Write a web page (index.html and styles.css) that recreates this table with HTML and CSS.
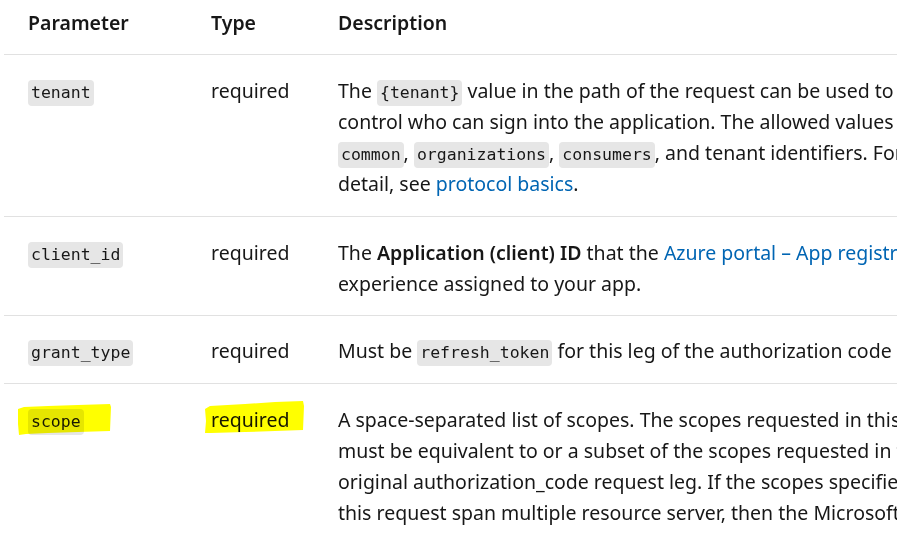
FILE: index.html
```html
<!DOCTYPE html>
<html lang="en">
<head>
<meta charset="utf-8">
<title>Parameters</title>
<link rel="stylesheet" href="styles.css">
</head>
<body>
<div class="wrap">
  <table class="params">
    <colgroup>
      <col class="col-param">
      <col class="col-type">
      <col class="col-desc">
    </colgroup>
    <thead>
      <tr><th>Parameter</th><th>Type</th><th>Description</th></tr>
    </thead>
    <tbody>
      <tr>
        <td><code>tenant</code></td>
        <td>required</td>
        <td>The <code>{tenant}</code> value in the path of the request can be used to<br>control who can sign into the application. The allowed values are<br><code>common</code>, <code>organizations</code>, <code>consumers</code>, and tenant identifiers. For more<br>detail, see <a href="#">protocol basics</a>.</td>
      </tr>
      <tr class="row-tight">
        <td><code>client_id</code></td>
        <td>required</td>
        <td>The <strong>Application (client) ID</strong> that the <a href="#">Azure portal – App registrations</a><br>experience assigned to your app.</td>
      </tr>
      <tr class="row-compact">
        <td><code>grant_type</code></td>
        <td>required</td>
        <td>Must be <code>refresh_token</code> for this leg of the authorization code flow.</td>
      </tr>
      <tr>
        <td><code>scope</code></td>
        <td>required</td>
        <td>A space-separated list of scopes. The scopes requested in this leg<br>must be equivalent to or a subset of the scopes requested in the<br>original authorization_code request leg. If the scopes specified in<br>this request span multiple resource server, then the Microsoft</td>
      </tr>
    </tbody>
  </table>
  <svg class="marker marker-scope" width="94" height="32" viewBox="0 0 94 32" aria-hidden="true">
    <polygon points="0,5 6,3 30,2 60,1 92,0 93,3 92,27 60,28 30,29 8,30 1,31 0,20"/>
  </svg>
  <svg class="marker marker-type" width="100" height="33" viewBox="0 0 100 33" aria-hidden="true">
    <polygon points="0,8 5,5 40,3 70,1 98,0 99,5 98,29 70,30 40,31 6,32 0,32 1,20"/>
  </svg>
</div>
</body>
</html>
```
FILE: styles.css
```css
html, body {
  margin: 0;
  padding: 0;
  background: #ffffff;
  overflow: hidden;
}

body {
  font-family: "Noto Sans", "Open Sans", sans-serif;
  font-size: 19.5px;
  line-height: 31px;
  color: #171717;
}

.wrap {
  position: relative;
  padding-left: 4px;
  width: 1200px;
}

.params {
  border-collapse: collapse;
  table-layout: fixed;
  width: 1100px;
}

.col-param { width: 183px; }
.col-type { width: 127px; }
.col-desc { width: 790px; }

.params th,
.params td {
  text-align: left;
  vertical-align: top;
  padding: 20px 0 17px 24px;
  border-bottom: 1px solid #e1e1e1;
  white-space: nowrap;
}

.params th {
  font-weight: 600;
  padding-top: 7px;
  padding-bottom: 16px;
}

.params .row-tight td {
  padding-bottom: 16px;
}

.params .row-compact td {
  padding-top: 19px;
  padding-bottom: 17px;
}

.params td strong {
  font-weight: 600;
  line-height: 1;
}

code {
  font-family: "DejaVu Sans Mono", "Liberation Mono", monospace;
  font-size: 16.5px;
  line-height: 1;
  background: #e6e6e6;
  border-radius: 4px;
  padding: 3px 3px 4px;
  color: #171717;
}

a {
  color: #0065b3;
  text-decoration: none;
  line-height: 1;
}

.marker {
  position: absolute;
  mix-blend-mode: multiply;
  fill: #ffff00;
}

.marker-scope {
  left: 18px;
  top: 404px;
}

.marker-type {
  left: 205px;
  top: 401px;
}
```
